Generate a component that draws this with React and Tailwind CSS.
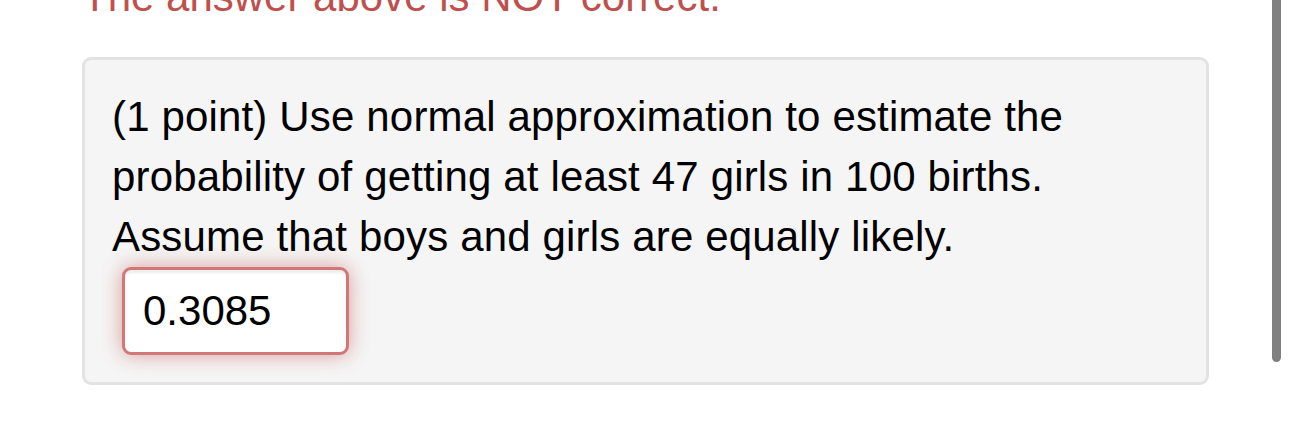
export default function App() {
  return (
    <div className="relative w-[1290px] h-[433px] overflow-hidden bg-white" style={{ fontFamily: '"Liberation Sans", Arial, sans-serif' }}>
      <div className="pl-[82px] w-[1209px]">
        <div className="-mt-[33px] text-[42px] leading-[60px] text-[#c0504d] whitespace-nowrap">The answer above is NOT correct.</div>
        <div className="mt-[30px] bg-[#f5f5f5] border-[3px] border-[#e3e3e3] rounded-[9px] p-[27px] text-[42px] leading-[60px] text-black">
          <p className="tracking-[0.16px]">(1 point) Use normal approximation to estimate the probability of getting at least 47 girls in 100 births. Assume that boys and girls are equally likely.</p>
          <div className="ml-[10px] mt-0 w-[227px] h-[88px] bg-white border-[3px] border-[#d27777] rounded-[9px] pl-[18px] flex items-center text-[42px] shadow-[0_0_20px_rgba(213,147,146,0.9),inset_0_3px_3px_rgba(0,0,0,0.075)]">
            0.3085
          </div>
        </div>
      </div>
      <div className="absolute left-[1272px] top-0 w-[9px] h-[362px] bg-[#808080] rounded-b-full"></div>
    </div>
  );
}
